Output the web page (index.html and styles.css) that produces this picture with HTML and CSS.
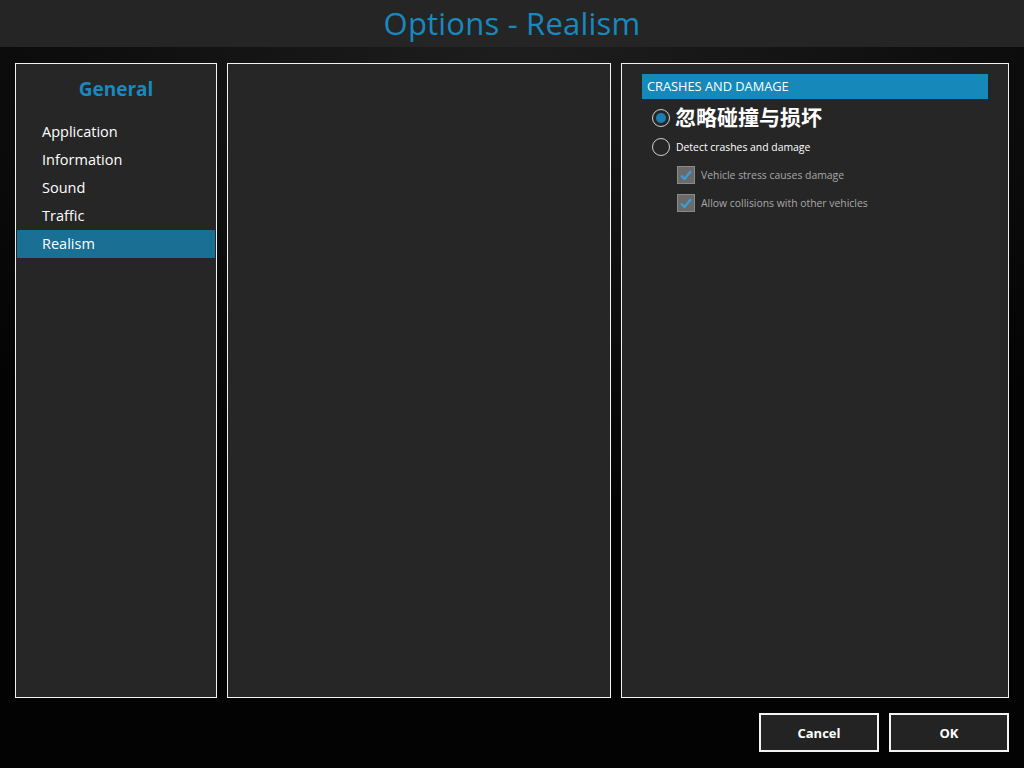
FILE: index.html
```html
<!DOCTYPE html>
<html>
<head>
<meta charset="utf-8">
<link rel="stylesheet" href="styles.css">
</head>
<body>
<header class="topbar"><h1 class="title">Options - Realism</h1></header>
<main class="main">
  <div class="panels">
    <section class="panel nav">
      <h2 class="nav-title">General</h2>
      <ul class="nav-list">
        <li class="nav-item">Application</li>
        <li class="nav-item">Information</li>
        <li class="nav-item">Sound</li>
        <li class="nav-item">Traffic</li>
        <li class="nav-item active">Realism</li>
      </ul>
    </section>
    <section class="panel middle"></section>
    <section class="panel options">
      <div class="group-head">CRASHES AND DAMAGE</div>
      <div class="radio-row big">
        <span class="radio checked"></span>
        <span class="radio-label cjk">忽略碰撞与损坏</span>
      </div>
      <div class="radio-row">
        <span class="radio"></span>
        <span class="radio-label">Detect crashes and damage</span>
      </div>
      <div class="check-row">
        <span class="check"><svg viewBox="0 0 18 18" width="18" height="18"><path d="M4 9.5 L7.5 13 L14 5" fill="none" stroke="#3d9bd1" stroke-width="2.4"/></svg></span>
        <span class="check-label">Vehicle stress causes damage</span>
      </div>
      <div class="check-row">
        <span class="check"><svg viewBox="0 0 18 18" width="18" height="18"><path d="M4 9.5 L7.5 13 L14 5" fill="none" stroke="#3d9bd1" stroke-width="2.4"/></svg></span>
        <span class="check-label">Allow collisions with other vehicles</span>
      </div>
    </section>
  </div>
  <div class="buttons">
    <button class="btn">Cancel</button>
    <button class="btn">OK</button>
  </div>
</main>
</body>
</html>
```
FILE: styles.css
```css
* { box-sizing: border-box; }
html, body { margin: 0; padding: 0; }
body {
  width: 1024px;
  height: 768px;
  overflow: hidden;
  font-family: "Open Sans", "Noto Sans", sans-serif;
  color: #fff;
  background: radial-gradient(ellipse 760px 460px at 520px 40px, #1e1e1e 0%, #101010 50%, #030303 100%);
}
.topbar {
  height: 47px;
  background: #252525;
  display: flex;
  align-items: center;
  justify-content: center;
}
.title {
  margin: 0;
  font-weight: 400;
  font-size: 31px;
  color: #1889bf;
  letter-spacing: 0.2px;
  line-height: 47px;
}
.main { padding: 16px 15px 0 15px; }
.panels { display: flex; gap: 10px; height: 635px; }
.panel {
  background: #262626;
  border: 1px solid #f2f2f2;
  height: 100%;
}
.nav { width: 202px; padding: 1px; }
.middle { width: 384px; }
.options { width: 388px; padding: 10px 20px; }
.nav-title {
  margin: 0;
  text-align: center;
  color: #1889bf;
  font-size: 19px;
  font-weight: 700;
  line-height: 24px;
  padding-top: 12px;
  margin-bottom: 17px;
}
.nav-list { list-style: none; margin: 0; padding: 0; }
.nav-item {
  height: 28px;
  line-height: 28px;
  padding-left: 25px;
  font-size: 14.5px;
}
.nav-item.active { background: #1a6f94; }
.group-head {
  height: 25px;
  line-height: 25px;
  background: #1788ba;
  font-size: 12.8px;
  padding-left: 5px;
}
.radio-row { display: flex; align-items: center; padding-left: 10px; height: 28px; }
.radio-row.big { height: 34px; padding-top: 4px; }
.radio {
  width: 18px; height: 18px;
  border-radius: 50%;
  border: 1.5px solid #d0d0d0;
  flex: none;
  position: relative;
}
.radio.checked::after {
  content: "";
  position: absolute;
  left: 2.5px; top: 2.5px;
  width: 10px; height: 10px;
  border-radius: 50%;
  background: #1b7fb5;
}
.radio-label { margin-left: 6px; font-size: 10.4px; }
.radio-label.cjk {
  font-family: "Noto Sans CJK SC", sans-serif;
  font-size: 21px;
  font-weight: 700;
  margin-left: 5px;
  margin-top: -4px;
}
.check-row { display: flex; align-items: center; padding-left: 35px; height: 28px; }
.check {
  width: 18px; height: 18px;
  background: #6a6a6a;
  border: 1px solid #8a8a8a;
  flex: none;
  display: flex;
}
.check svg { margin: -1px; }
.check-label { margin-left: 6px; font-size: 10.4px; color: #a8a8a8; }
.buttons {
  display: flex;
  justify-content: flex-end;
  gap: 10px;
  margin-top: 15px;
}
.btn {
  width: 120px;
  height: 39px;
  background: #232323;
  border: 2px solid #f4f4f4;
  color: #fff;
  font-family: "Open Sans", "Noto Sans", sans-serif;
  font-weight: 700;
  font-size: 13px;
  padding: 0;
}
```
